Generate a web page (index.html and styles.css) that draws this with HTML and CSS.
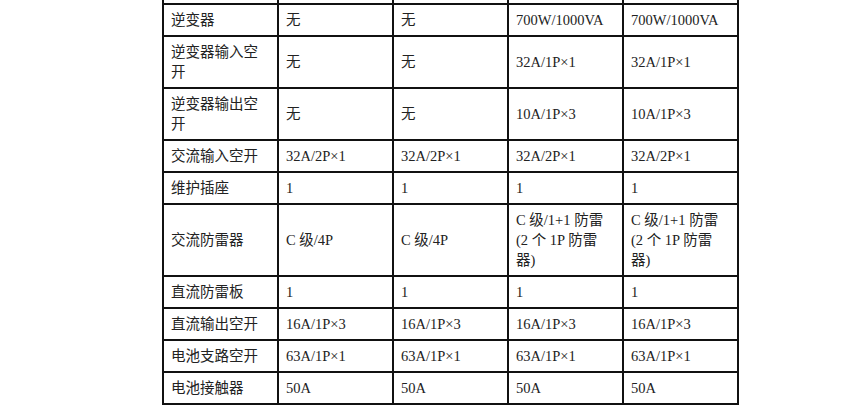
FILE: index.html
```html
<!DOCTYPE html>
<html lang="zh">
<head>
<meta charset="utf-8">
<link rel="stylesheet" href="styles.css">
</head>
<body>
<table class="spec">
  <colgroup>
    <col class="c"><col class="c"><col class="c"><col class="c"><col class="c">
  </colgroup>
  <tr class="ghost"><td>&nbsp;</td><td></td><td></td><td></td><td></td></tr>
  <tr><td>逆变器</td><td>无</td><td>无</td><td>700W/1000VA</td><td>700W/1000VA</td></tr>
  <tr><td>逆变器输入空开</td><td>无</td><td>无</td><td>32A/1P×1</td><td>32A/1P×1</td></tr>
  <tr><td>逆变器输出空开</td><td>无</td><td>无</td><td>10A/1P×3</td><td>10A/1P×3</td></tr>
  <tr><td>交流输入空开</td><td>32A/2P×1</td><td>32A/2P×1</td><td>32A/2P×1</td><td>32A/2P×1</td></tr>
  <tr><td>维护插座</td><td>1</td><td>1</td><td>1</td><td>1</td></tr>
  <tr><td>交流防雷器</td><td>C 级/4P</td><td>C 级/4P</td><td>C 级/1+1 防雷<br>(2 个 1P 防雷<br>器)</td><td>C 级/1+1 防雷<br>(2 个 1P 防雷<br>器)</td></tr>
  <tr><td>直流防雷板</td><td>1</td><td>1</td><td>1</td><td>1</td></tr>
  <tr><td>直流输出空开</td><td>16A/1P×3</td><td>16A/1P×3</td><td>16A/1P×3</td><td>16A/1P×3</td></tr>
  <tr><td>电池支路空开</td><td>63A/1P×1</td><td>63A/1P×1</td><td>63A/1P×1</td><td>63A/1P×1</td></tr>
  <tr><td>电池接触器</td><td>50A</td><td>50A</td><td>50A</td><td>50A</td></tr>
  <tr class="ghost"><td>&nbsp;</td><td></td><td></td><td></td><td></td></tr>
</table>
</body>
</html>
```

FILE: styles.css
```css
html, body {
  margin: 0;
  padding: 0;
  background: #ffffff;
}

body {
  overflow: hidden;
  height: 405px;
}

.spec {
  border-collapse: collapse;
  table-layout: fixed;
  width: 577px;
  margin: -29px 0 0 162px;
  font-family: "Liberation Serif", "Noto Sans CJK SC", serif;
  font-size: 14.5px;
  line-height: 20px;
  color: #222222;
}

.spec .c {
  width: 115px;
}

.spec td {
  border: 2px solid #111111;
  padding: 5px 7px;
  vertical-align: middle;
  text-align: left;
  word-break: break-all;
}
```
